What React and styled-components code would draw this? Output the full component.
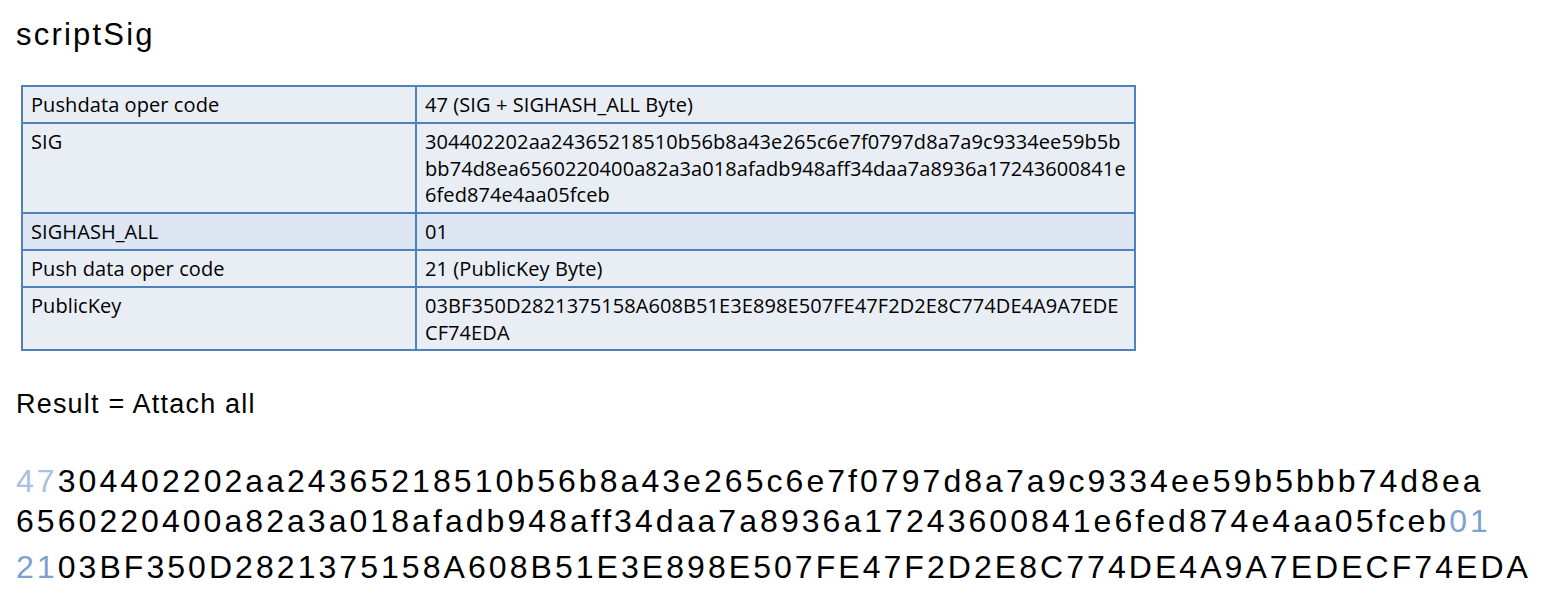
import React from "react";
import styled, { createGlobalStyle } from "styled-components";

const GlobalStyle = createGlobalStyle`
  html, body {
    margin: 0;
    padding: 0;
    background: #ffffff;
  }
  body {
    font-family: "Liberation Sans", Arial, sans-serif;
    color: #000000;
  }
`;

const rows = [
  { label: "Pushdata oper code", value: ["47 (SIG + SIGHASH_ALL Byte)"] },
  {
    label: "SIG",
    value: [
      "304402202aa24365218510b56b8a43e265c6e7f0797d8a7a9c9334ee59b5b",
      "bb74d8ea6560220400a82a3a018afadb948aff34daa7a8936a17243600841e",
      "6fed874e4aa05fceb",
    ],
  },
  { label: "SIGHASH_ALL", value: ["01"], shaded: true },
  { label: "Push data oper code", value: ["21 (PublicKey Byte)"] },
  {
    label: "PublicKey",
    value: ["03BF350D2821375158A608B51E3E898E507FE47F2D2E8C774DE4A9A7EDE", "CF74EDA"],
  },
];

export default function App() {
  return (
    <>
      <GlobalStyle />
      <Page>
        <Title>scriptSig</Title>
        <Table>
          <tbody>
            {rows.map((row) => (
              <Row key={row.label} $shaded={row.shaded}>
                <LabelCell>{row.label}</LabelCell>
                <ValueCell>
                  {row.value.map((line) => (
                    <CellLine key={line}>{line}</CellLine>
                  ))}
                </ValueCell>
              </Row>
            ))}
          </tbody>
        </Table>
        <Result>Result = Attach all</Result>
        <HexBlock>
          <HexLine>
            <Code $tone="light">47</Code>
            304402202aa24365218510b56b8a43e265c6e7f0797d8a7a9c9334ee59b5bbb74d8ea
          </HexLine>
          <HexLine>
            6560220400a82a3a018afadb948aff34daa7a8936a17243600841e6fed874e4aa05fceb
            <Code>01</Code>
          </HexLine>
          <HexLine $spaced>
            <Code>21</Code>
            03BF350D2821375158A608B51E3E898E507FE47F2D2E8C774DE4A9A7EDECF74EDA
          </HexLine>
        </HexBlock>
      </Page>
    </>
  );
}

const Page = styled.div`
  display: flex;
  flex-direction: column;
  align-items: flex-start;
  padding: 18px 0 0 16px;
`;

const Title = styled.h1`
  margin: 0;
  font-family: "Liberation Sans", Arial, sans-serif;
  font-weight: normal;
  font-size: 31px;
  line-height: 34px;
  letter-spacing: 2.2px;
`;

const Table = styled.table`
  margin: 33px 0 0 5px;
  border-collapse: collapse;
  border: 2px solid #4f81bd;
  font-family: "Open Sans", "Noto Sans", sans-serif;
  font-size: 20px;
  letter-spacing: 0.08px;
  color: #000000;
`;

const Row = styled.tr`
  background: ${(p) => (p.$shaded ? "#dce5f1" : "#e9edf4")};
`;

const LabelCell = styled.td`
  width: 376px;
  border: 2px solid #4f81bd;
  padding: 5px 8px 3px 8px;
  vertical-align: top;
  line-height: 26.8px;
  white-space: nowrap;
`;

const ValueCell = styled(LabelCell)`
  width: 698px;
`;

const CellLine = styled.div`
  white-space: nowrap;
`;

const Result = styled.p`
  margin: 38px 0 0 0;
  font-size: 27px;
  line-height: 30px;
  letter-spacing: 1.2px;
`;

const HexBlock = styled.div`
  margin-top: 42px;
  display: flex;
  flex-direction: column;
  font-size: 32px;
  letter-spacing: 3.05px;
`;

const HexLine = styled.div`
  white-space: nowrap;
  line-height: 40px;
  margin-top: ${(p) => (p.$spaced ? "6px" : "0")};
`;

const Code = styled.span`
  color: ${(p) => (p.$tone === "light" ? "#a9c0e1" : "#7ea1d1")};
`;
